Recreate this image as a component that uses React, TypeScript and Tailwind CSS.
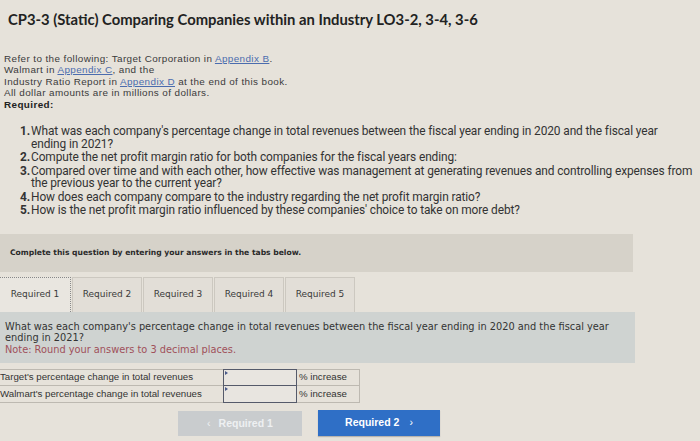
import React from "react";

const Link = ({ children }: { children: React.ReactNode }) => (
  <span className="text-[#4b6cae] underline underline-offset-1">{children}</span>
);

export default function App() {
  const items: [string, string, string][] = [
    ["1.", "What was each company's percentage change in total revenues between the fiscal year ending in 2020 and the fiscal year ending in 2021?", "max-w-[640px]"],
    ["2.", "Compute the net profit margin ratio for both companies for the fiscal years ending:", ""],
    ["3.", "Compared over time and with each other, how effective was management at generating revenues and controlling expenses from the previous year to the current year?", ""],
    ["4.", "How does each company compare to the industry regarding the net profit margin ratio?", ""],
    ["5.", "How is the net profit margin ratio influenced by these companies' choice to take on more debt?", ""],
  ];
  const tabs = ["Required 1", "Required 2", "Required 3", "Required 4", "Required 5"];
  return (
    <div className="w-[700px] h-[441px] overflow-hidden bg-[#e6e2da] text-[#2e2e2e] font-['Lato',sans-serif]">
      <div className="pl-[8px] pt-[10px] text-[14.8px] font-bold leading-[18px] text-[#222]">
        CP3-3 (Static) Comparing Companies within an Industry LO3-2, 3-4, 3-6
      </div>
      <div className="pl-[4px] mt-[25px] text-[9.9px] leading-[11.4px] tracking-[0.4px] text-[#3a3a3a] font-['Liberation_Sans',sans-serif]">
        <div>Refer to the following: Target Corporation in <Link>Appendix B</Link>.</div>
        <div>Walmart in <Link>Appendix C</Link>, and the</div>
        <div>Industry Ratio Report in <Link>Appendix D</Link> at the end of this book.</div>
        <div>All dollar amounts are in millions of dollars.</div>
        <div className="font-bold text-[#222]">Required:</div>
      </div>
      <div className="mt-[15px] pl-[20px] text-[11.9px] leading-[12.5px] text-[#333] font-['Roboto',sans-serif] tracking-[-0.1px]">
        {items.map(([n, t, c]) => (
          <div key={n} className="flex mb-[1px]">
            <span className="w-[11px] shrink-0 font-bold">{n}</span>
            <span className={c}>{t}</span>
          </div>
        ))}
      </div>
      <div className="mt-[17px] w-[633px] h-[38px] bg-[#d6d2c9] flex items-center pl-[10px] text-[7.6px] font-bold font-['DejaVu_Sans',sans-serif] text-[#2a2a2a]">
        Complete this question by entering your answers in the tabs below.
      </div>
      <div className="mt-[5px] flex h-[35px] font-['DejaVu_Sans',sans-serif] text-[9px] text-[#3a3a3a]">
        {tabs.map((t, i) => (
          <div
            key={t}
            className={
              i === 0
                ? "w-[71px] flex items-center justify-center bg-[#e9e6e0] border-t border-r border-dotted border-[#888]"
                : "w-[70px] ml-[1px] flex items-center justify-center bg-[#e2ded7] border border-b-0 border-[#ccc8c0]"
            }
          >
            {t}
          </div>
        ))}
      </div>
      <div className="w-[635px] bg-[#cfd3d1] pl-[5px] pr-[4px] pt-[9px] pb-[8px] font-['DejaVu_Sans',sans-serif] text-[9.8px] leading-[11.5px] text-[#333]">
        <div>What was each company's percentage change in total revenues between the fiscal year ending in 2020 and the fiscal year ending in 2021?</div>
        <div className="text-[#a0505a]">Note: Round your answers to 3 decimal places.</div>
      </div>
      <div className="mt-[6px] font-['Liberation_Sans',sans-serif] text-[9.7px] text-[#333]">
        {["Target's percentage change in total revenues", "Walmart's percentage change in total revenues"].map((l, i) => (
          <div key={l} className="flex h-[17px]">
            <div className={"w-[223px] flex items-center border-[#bdb9b1] border-b " + (i === 0 ? "border-t" : "")}>{l}</div>
            <div className={"w-[74px] relative bg-[#e8e5e0] border-[#555a6a] border-x border-b " + (i === 0 ? "border-t" : "")}>
              <span className="absolute left-[1px] top-[1px] w-0 h-0 border-y-[2px] border-y-transparent border-l-[3px] border-l-[#4a5a8a]" />
            </div>
            <div className={"w-[63px] flex items-center pl-[2px] border-[#bdb9b1] border-r border-b " + (i === 0 ? "border-t" : "")}>% increase</div>
          </div>
        ))}
      </div>
      <div className="mt-[8px] flex font-['Liberation_Sans',sans-serif] text-[10.5px] font-bold">
        <div className="ml-[178px] w-[124px] h-[25px] bg-[#c9ccce] text-[#eef0f2] flex items-center justify-center gap-[8px]">
          <span className="font-normal">‹</span>
          <span>Required 1</span>
        </div>
        <div className="ml-[16px] w-[122px] h-[26px] mt-[-1px] bg-[#2f6fc6] text-white flex items-center justify-center gap-[10px] shadow-[0_1px_1px_rgba(0,0,0,0.2)]">
          <span>Required 2</span>
          <span className="font-normal">›</span>
        </div>
      </div>
    </div>
  );
}
